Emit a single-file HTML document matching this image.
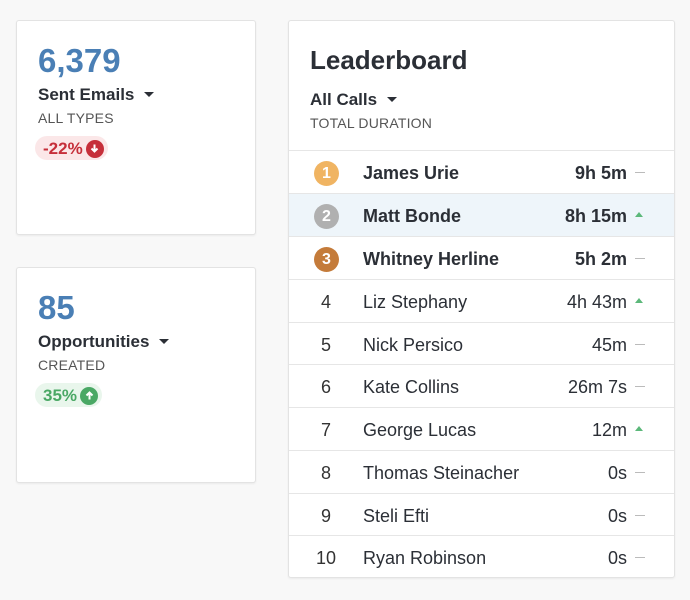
<!DOCTYPE html>
<html><head><meta charset="utf-8"><style>
*{box-sizing:border-box;margin:0;padding:0}
body{width:690px;height:600px;background:#f8f8f8;font-family:"Liberation Sans",Arial,sans-serif;color:#2b2f36;position:relative;overflow:hidden}
.card{position:absolute;background:#fff;border:1px solid #e3e3e3;border-radius:3px;box-shadow:0 1px 2px rgba(0,0,0,0.06)}
.big{position:absolute;left:21px;font-size:33px;font-weight:bold;color:#4a7fb5}
.lbl{position:absolute;left:21px;font-size:17px;font-weight:bold;color:#2b2f36}
.car{display:inline-block;width:0;height:0;border-left:5px solid transparent;border-right:5px solid transparent;border-top:5px solid #2b2f36;margin-left:10px;vertical-align:middle;position:relative;top:-1px}
.sub{position:absolute;left:21px;font-size:14px;color:#555;letter-spacing:0.2px}
.pill{position:absolute;left:18px;height:24px;border-radius:12px;font-size:17px;font-weight:bold;padding:1px 4px 0 8px;display:flex;align-items:center;gap:3px}
.ico{width:18px;height:18px;border-radius:50%;display:inline-flex;align-items:center;justify-content:center}
.row{position:absolute;left:0;width:386px;height:43px;border-top:1px solid #e6e6e6;font-size:18px}
.rk{position:absolute;left:25px;top:10px;width:25px;height:25px;border-radius:50%;color:#fff;text-align:center;line-height:25px;font-size:16px;font-weight:bold}
.num{position:absolute;left:24px;width:26px;text-align:center;top:12px;color:#333}
.nm{position:absolute;left:74px;top:12px}
.tm{position:absolute;right:48px;top:12px}
.ind{position:absolute;left:346px;top:21px;width:10px;height:1px;background:#bbb}
.up{position:absolute;left:346px;top:18px;width:0;height:0;border-left:4px solid transparent;border-right:4px solid transparent;border-bottom:5px solid #5cb87a}
.b{font-weight:bold}
</style></head><body>
<div class="card" style="left:16px;top:20px;width:240px;height:215px">
 <div class="big" style="top:21px">6,379</div>
 <div class="lbl" style="top:64px">Sent Emails<span class="car"></span></div>
 <div class="sub" style="top:89px">ALL TYPES</div>
 <div class="pill" style="top:115px;background:#fbe7e8;color:#c62f3a">-22%<span class="ico" style="background:#c62f3a"><svg width="11" height="11" viewBox="0 0 11 11"><path d="M5.5 1.5v7M2.5 5.5l3 3 3-3" stroke="#fff" stroke-width="2" fill="none"/></svg></span></div>
</div>
<div class="card" style="left:16px;top:267px;width:240px;height:216px">
 <div class="big" style="top:21px">85</div>
 <div class="lbl" style="top:64px">Opportunities<span class="car"></span></div>
 <div class="sub" style="top:89px">CREATED</div>
 <div class="pill" style="top:115px;background:#e9f6ec;color:#4aa865">35%<span class="ico" style="background:#4aa865"><svg width="11" height="11" viewBox="0 0 11 11"><path d="M5.5 9.5v-7M2.5 5.5l3-3 3 3" stroke="#fff" stroke-width="2" fill="none"/></svg></span></div>
</div>
<div class="card" style="left:288px;top:20px;width:387px;height:558px;overflow:hidden">
 <div style="position:absolute;left:21px;top:24px;font-size:26px;font-weight:bold">Leaderboard</div>
 <div class="lbl" style="top:69px">All Calls<span class="car"></span></div>
 <div class="sub" style="top:94px">TOTAL DURATION</div>
 <div class="row b" style="top:129px"><div class="rk" style="background:#f0b462">1</div><div class="nm">James Urie</div><div class="tm">9h 5m</div><div class="ind"></div></div>
 <div class="row b" style="top:172px;background:#eef5fa"><div class="rk" style="background:#b0b0b0">2</div><div class="nm">Matt Bonde</div><div class="tm">8h 15m</div><div class="up"></div></div>
 <div class="row b" style="top:215px"><div class="rk" style="background:#c47b3a">3</div><div class="nm">Whitney Herline</div><div class="tm">5h 2m</div><div class="ind"></div></div>
 <div class="row" style="top:258px"><div class="num">4</div><div class="nm">Liz Stephany</div><div class="tm">4h 43m</div><div class="up"></div></div>
 <div class="row" style="top:301px"><div class="num">5</div><div class="nm">Nick Persico</div><div class="tm">45m</div><div class="ind"></div></div>
 <div class="row" style="top:343px"><div class="num">6</div><div class="nm">Kate Collins</div><div class="tm">26m 7s</div><div class="ind"></div></div>
 <div class="row" style="top:386px"><div class="num">7</div><div class="nm">George Lucas</div><div class="tm">12m</div><div class="up"></div></div>
 <div class="row" style="top:429px"><div class="num">8</div><div class="nm">Thomas Steinacher</div><div class="tm">0s</div><div class="ind"></div></div>
 <div class="row" style="top:472px"><div class="num">9</div><div class="nm">Steli Efti</div><div class="tm">0s</div><div class="ind"></div></div>
 <div class="row" style="top:514px"><div class="num">10</div><div class="nm">Ryan Robinson</div><div class="tm">0s</div><div class="ind"></div></div>
</div>
</body></html>
